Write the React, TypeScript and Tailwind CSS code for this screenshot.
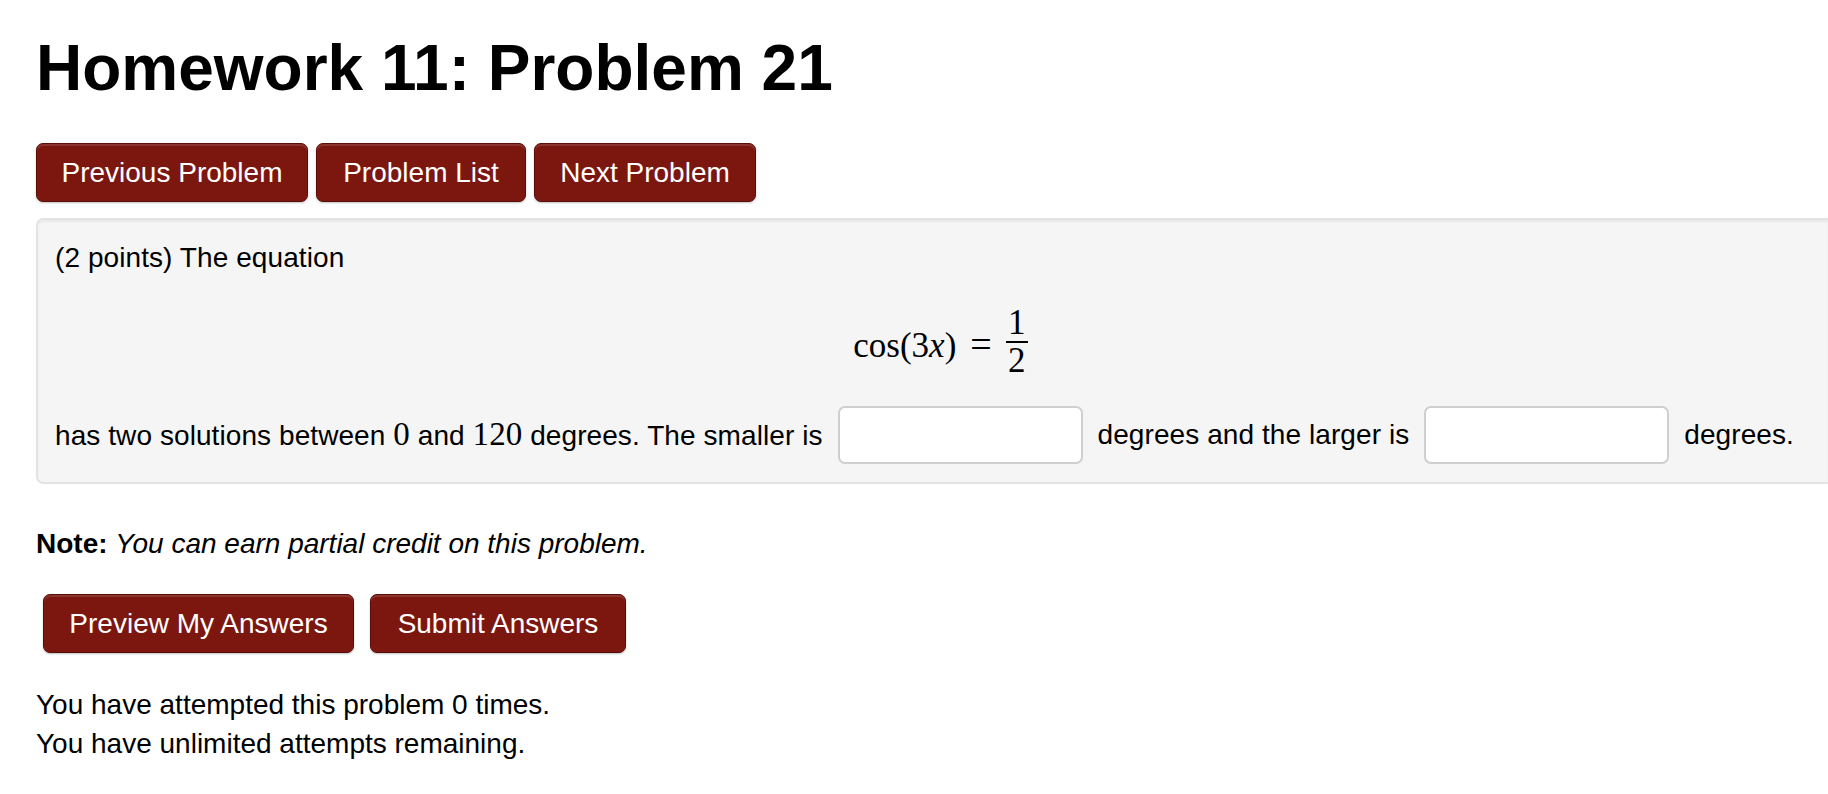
import React from 'react';

const btn =
  'h-[59px] px-0 whitespace-nowrap rounded-[7px] bg-[#7c1710] border border-[#5a0e09] text-white text-[28px] leading-none shadow-[inset_0_2px_0_rgba(255,255,255,0.12),0_1px_2px_rgba(0,0,0,0.25)]';

const serif = "font-['Liberation_Serif','Times_New_Roman',serif]";

const AnswerBox: React.FC = () => (
  <input
    type="text"
    className="w-[245px] h-[58px] bg-white border-2 border-[#cfcfcf] rounded-[7px] outline-none px-3 text-[28px]"
  />
);

export default function App() {
  return (
    <div className="min-h-[794px] w-full overflow-hidden bg-white text-black font-['Liberation_Sans',Arial,sans-serif]">
      <div className="pl-[36px] pt-[30px]">
        <h1 className="text-[64px] font-bold leading-[76px]">Homework 11: Problem 21</h1>

        <div className="flex gap-[8px] mt-[37px]">
          <button className={`${btn} w-[272px]`}>Previous Problem</button>
          <button className={`${btn} w-[210px]`}>Problem List</button>
          <button className={`${btn} w-[222px]`}>Next Problem</button>
        </div>

        <div className="mt-[16px] h-[266px] bg-[#f5f5f5] border-2 border-r-0 border-[#e3e3e3] rounded-l-[7px] shadow-[inset_0_2px_2px_rgba(0,0,0,0.05)] pl-[17px] pt-[18px] text-[28px] tracking-[0.08px]">
          <div className="leading-[40px]">(2 points) The equation</div>

          <div className={`flex justify-center items-center h-[128px] pr-[2px] ${serif} text-[35px] tracking-normal`}>
            <span className="mt-[8px]">
              cos(3<i>x</i>)
            </span>
            <span className="mx-[14px] mt-[4px] text-[38px]">=</span>
            <span className="flex flex-col items-center leading-[34px]">
              <span className="px-[2px]">1</span>
              <span className="w-[22px] h-[2px] bg-black my-[1px]" />
              <span className="px-[2px]">2</span>
            </span>
          </div>

          <div className="flex items-center whitespace-nowrap">
            <span>
              has two solutions between <span className={`${serif} text-[33px]`}>0</span> and{' '}
              <span className={`${serif} text-[33px]`}>120</span> degrees. The smaller is
            </span>
            <span className="ml-[15px] mr-[15px]">
              <AnswerBox />
            </span>
            <span>degrees and the larger is</span>
            <span className="ml-[15px] mr-[15px]">
              <AnswerBox />
            </span>
            <span>degrees.</span>
          </div>
        </div>

        <div className="mt-[40px] text-[28px] leading-[40px]">
          <b>Note:</b> <i>You can earn partial credit on this problem.</i>
        </div>

        <div className="flex gap-[16px] mt-[30px] ml-[7px]">
          <button className={`${btn} w-[311px]`}>Preview My Answers</button>
          <button className={`${btn} w-[256px]`}>Submit Answers</button>
        </div>

        <div className="mt-[32px] text-[28px] leading-[39px]">
          <div>You have attempted this problem 0 times.</div>
          <div>You have unlimited attempts remaining.</div>
        </div>
      </div>
    </div>
  );
}
